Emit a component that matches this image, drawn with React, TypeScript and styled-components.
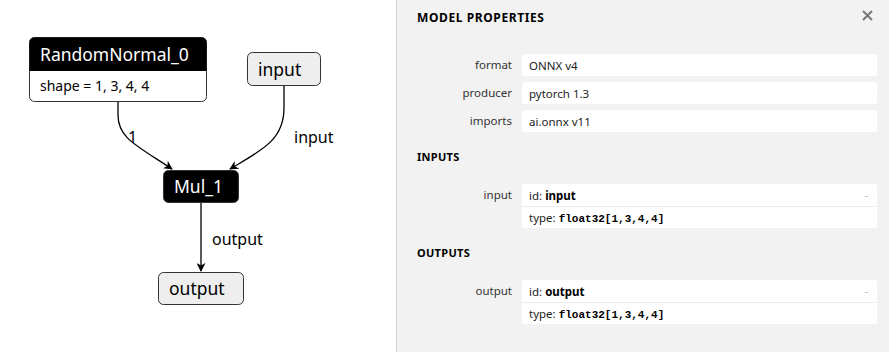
import React from 'react';
import styled, { createGlobalStyle } from 'styled-components';

// model data
interface Attribute {
  name: string;
  value: string;
}

interface Argument {
  name: string;
  id: string;
  type: string;
}

const metadata: Attribute[] = [
  { name: 'format', value: 'ONNX v4' },
  { name: 'producer', value: 'pytorch 1.3' },
  { name: 'imports', value: 'ai.onnx v11' }
];

const inputs: Argument[] = [{ name: 'input', id: 'input', type: 'float32[1,3,4,4]' }];
const outputs: Argument[] = [{ name: 'output', id: 'output', type: 'float32[1,3,4,4]' }];

const GlobalStyle = createGlobalStyle`
  html, body {
    margin: 0;
    padding: 0;
    background: #ffffff;
  }
  body {
    font-family: 'Noto Sans', 'DejaVu Sans', sans-serif;
    color: #000;
  }
`;

const Layout = styled.div`
  display: flex;
  width: 889px;
  height: 352px;
  overflow: hidden;
`;

const Canvas = styled.div`
  width: 396px;
  flex-shrink: 0;
  background: #ffffff;
`;

const Sidebar = styled.aside`
  flex: 1;
  background: #f2f2f2;
  border-left: 1px solid #d0d0d0;
  display: flex;
  flex-direction: column;
`;

const SidebarHeader = styled.div`
  height: 34px;
  padding: 0 15px 0 20px;
  display: flex;
  align-items: center;
  justify-content: space-between;
`;

const SidebarTitle = styled.h1`
  margin: 0;
  font-size: 12px;
  font-weight: 700;
  letter-spacing: 0.6px;
  color: #000;
`;

const CloseButton = styled.button`
  border: none;
  background: none;
  padding: 0;
  width: 14px;
  height: 14px;
  display: flex;
  align-items: center;
  justify-content: center;
  cursor: pointer;
  margin-top: -4px;
`;

const SidebarContent = styled.div`
  padding: 20px 12px 0 20px;
  display: flex;
  flex-direction: column;
`;

const SectionTitle = styled.h2`
  margin: 11px 0 19px 0;
  font-size: 11px;
  line-height: 16px;
  font-weight: 700;
  letter-spacing: 0.3px;
  color: #000;
`;

const Row = styled.div`
  display: grid;
  grid-template-columns: 95px 1fr;
  column-gap: 10px;
  margin-bottom: 6px;
`;

const Label = styled.div`
  text-align: right;
  font-size: 11.5px;
  line-height: 22px;
  color: #333;
`;

const ValueBox = styled.div`
  background: #ffffff;
  border-radius: 3px;
  display: flex;
  flex-direction: column;
`;

const ValueLine = styled.div<{ $divider?: boolean }>`
  display: flex;
  align-items: center;
  justify-content: space-between;
  height: ${({ $divider }) => ($divider ? '21px' : '22px')};
  padding: 0 9px 0 7px;
  font-size: 11.5px;
  color: #222;
  border-top: ${({ $divider }) => ($divider ? '1px solid #ececec' : 'none')};
`;

const Strong = styled.b`
  font-weight: 700;
  color: #000;
`;

const Code = styled.code`
  font-family: 'Liberation Mono', 'DejaVu Sans Mono', monospace;
  font-size: 11px;
  font-weight: 700;
  color: #000;
`;

const Expander = styled.span`
  color: #aaa;
  font-size: 10px;
`;

const GraphText = styled.text<{ $size: number; $fill?: string }>`
  font-family: 'Noto Sans', 'DejaVu Sans', sans-serif;
  font-size: ${({ $size }) => $size}px;
  fill: ${({ $fill }) => $fill || '#000'};
`;

const Graph: React.FC = () => (
  <svg width="396" height="352" viewBox="0 0 396 352">
    <defs>
      <marker id="arrow" viewBox="0 0 10 10" refX="9" refY="5" markerWidth="9" markerHeight="9" orient="auto" markerUnits="userSpaceOnUse">
        <path d="M0,0 L10,5 L0,10 L3,5 z" fill="#000" />
      </marker>
    </defs>

    {/* edges */}
    <path d="M118,101 L118,115 C118,138 136,145 172,169" fill="none" stroke="#000" strokeWidth="1.3" markerEnd="url(#arrow)" />
    <path d="M284,86 L284,108 C284,140 262,150 230,169" fill="none" stroke="#000" strokeWidth="1.3" markerEnd="url(#arrow)" />
    <path d="M201,203 L201,271" fill="none" stroke="#000" strokeWidth="1.3" markerEnd="url(#arrow)" />

    <GraphText $size={16} x="128" y="143">1</GraphText>
    <GraphText $size={16} x="294" y="143">input</GraphText>
    <GraphText $size={16} x="212" y="245">output</GraphText>

    {/* RandomNormal_0 */}
    <rect x="29.5" y="37.5" width="177" height="64" rx="5" fill="#fff" stroke="#333" strokeWidth="1" />
    <path d="M29.5,71 L29.5,42.5 Q29.5,37.5 34.5,37.5 L201.5,37.5 Q206.5,37.5 206.5,42.5 L206.5,71 Z" fill="#000" />
    <GraphText $size={17.5} $fill="#fff" x="40" y="61">RandomNormal_0</GraphText>
    <GraphText $size={14} x="40" y="91">shape = 1, 3, 4, 4</GraphText>

    {/* input */}
    <rect x="247.5" y="52.5" width="73" height="33" rx="5" fill="#eee" stroke="#333" strokeWidth="1" />
    <GraphText $size={17.5} x="258" y="76">input</GraphText>

    {/* Mul_1 */}
    <rect x="163.5" y="170.5" width="75" height="32" rx="5" fill="#000" stroke="#333" strokeWidth="1" />
    <GraphText $size={17.5} $fill="#fff" x="174" y="193">Mul_1</GraphText>

    {/* output */}
    <rect x="158.5" y="272.5" width="85" height="32" rx="5" fill="#eee" stroke="#333" strokeWidth="1" />
    <GraphText $size={17.5} x="169" y="295">output</GraphText>
  </svg>
);

const ArgumentRow: React.FC<{ arg: Argument }> = ({ arg }) => (
  <Row>
    <Label>{arg.name}</Label>
    <ValueBox>
      <ValueLine>
        <span>
          id: <Strong>{arg.id}</Strong>
        </span>
        <Expander>-</Expander>
      </ValueLine>
      <ValueLine $divider>
        <span>
          type: <Code>{arg.type}</Code>
        </span>
      </ValueLine>
    </ValueBox>
  </Row>
);

const App: React.FC = () => (
  <>
    <GlobalStyle />
    <Layout>
      <Canvas>
        <Graph />
      </Canvas>
      <Sidebar>
        <SidebarHeader>
          <SidebarTitle>MODEL PROPERTIES</SidebarTitle>
          <CloseButton aria-label="close">
            <svg width="11" height="11" viewBox="0 0 11 11">
              <path d="M1,1 L10,10 M10,1 L1,10" stroke="#777" strokeWidth="2" />
            </svg>
          </CloseButton>
        </SidebarHeader>
        <SidebarContent>
          {metadata.map((item) => (
            <Row key={item.name}>
              <Label>{item.name}</Label>
              <ValueBox>
                <ValueLine>{item.value}</ValueLine>
              </ValueBox>
            </Row>
          ))}
          <SectionTitle>INPUTS</SectionTitle>
          {inputs.map((arg) => (
            <ArgumentRow key={arg.name} arg={arg} />
          ))}
          <SectionTitle>OUTPUTS</SectionTitle>
          {outputs.map((arg) => (
            <ArgumentRow key={arg.name} arg={arg} />
          ))}
        </SidebarContent>
      </Sidebar>
    </Layout>
  </>
);

export default App;
